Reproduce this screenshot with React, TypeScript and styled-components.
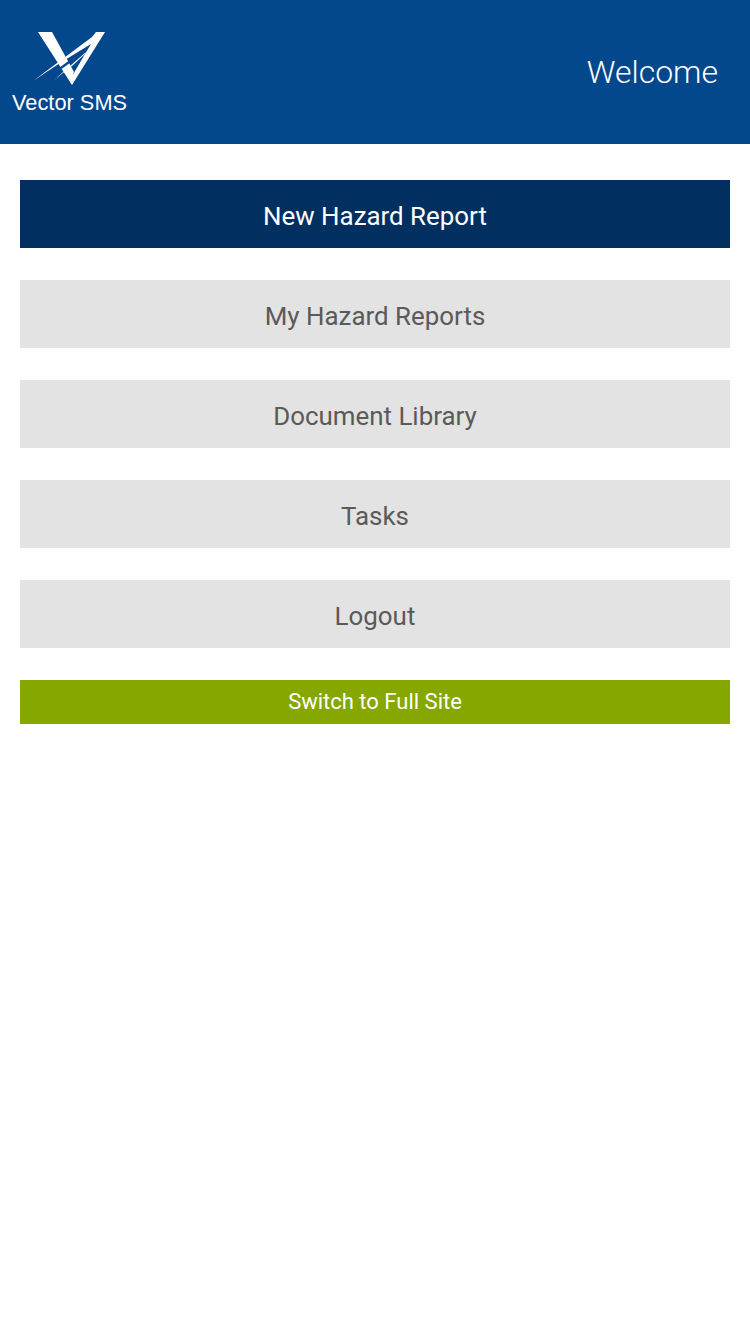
import React from "react";
import styled, { createGlobalStyle } from "styled-components";

const Global = createGlobalStyle`
  html, body { margin: 0; padding: 0; background: #fff; }
  body { font-family: Roboto, "Liberation Sans", sans-serif; }
`;
const Page = styled.div`
  width: 750px;
  min-height: 1334px;
  background: #fff;
`;
const Header = styled.header`
  height: 144px;
  background: #03478c;
  display: flex;
  align-items: flex-start;
  justify-content: space-between;
  padding: 0 32px 0 12px;
  box-sizing: border-box;
`;
const Brand = styled.div`
  display: flex;
  flex-direction: column;
  align-items: center;
  padding-top: 32px;
`;
const LogoMark = styled.svg`
  display: block;
  width: 74px;
  height: 54px;
`;
const BrandName = styled.div`
  font-family: "Liberation Sans", Arial, sans-serif;
  font-size: 21.8px;
  line-height: 24px;
  color: #fff;
  margin-top: 5px;
`;
const Welcome = styled.div`
  font-family: Roboto, sans-serif;
  font-weight: 300;
  font-size: 32px;
  line-height: 38px;
  color: #fff;
  margin-top: 53px;
`;
const Menu = styled.nav`
  display: flex;
  flex-direction: column;
  gap: 32px;
  padding: 36px 20px 0;
`;
const MenuButton = styled.div<{ $primary?: boolean }>`
  height: 68px;
  display: flex;
  align-items: center;
  justify-content: center;
  padding-top: 4px;
  box-sizing: border-box;
  font-size: 25.9px;
  background: ${(p) => (p.$primary ? "#012f5f" : "#e3e3e3")};
  color: ${(p) => (p.$primary ? "#fff" : "#5a5a5a")};
`;
const SwitchButton = styled.div`
  height: 44px;
  display: flex;
  align-items: center;
  justify-content: center;
  padding-bottom: 2px;
  box-sizing: border-box;
  font-size: 22px;
  background: #86a700;
  color: #fff;
`;

export default function App() {
  return (
    <Page>
      <Global />
      <Header>
        <Brand>
          <LogoMark viewBox="33 32 74 54">
            <path fill="#fff" d="M38 32H52L74 72L72 85Z" />
            <path fill="none" stroke="#03478c" strokeWidth="2.2" d="M47 78L90 47" />
            <path fill="none" stroke="#03478c" strokeWidth="2.6" d="M72 67L80 62L74 75" />
            <path fill="#fff" d="M105 32L72 85L71 78L85 54L91 44L60 63L33 81L92 37L96 32Z" />
            <path fill="#fff" d="M54 80L86 52L85 54L72 66Z" />
          </LogoMark>
          <BrandName>Vector SMS</BrandName>
        </Brand>
        <Welcome>Welcome</Welcome>
      </Header>
      <Menu>
        <MenuButton $primary>New Hazard Report</MenuButton>
        <MenuButton>My Hazard Reports</MenuButton>
        <MenuButton>Document Library</MenuButton>
        <MenuButton>Tasks</MenuButton>
        <MenuButton>Logout</MenuButton>
        <SwitchButton>Switch to Full Site</SwitchButton>
      </Menu>
    </Page>
  );
}
